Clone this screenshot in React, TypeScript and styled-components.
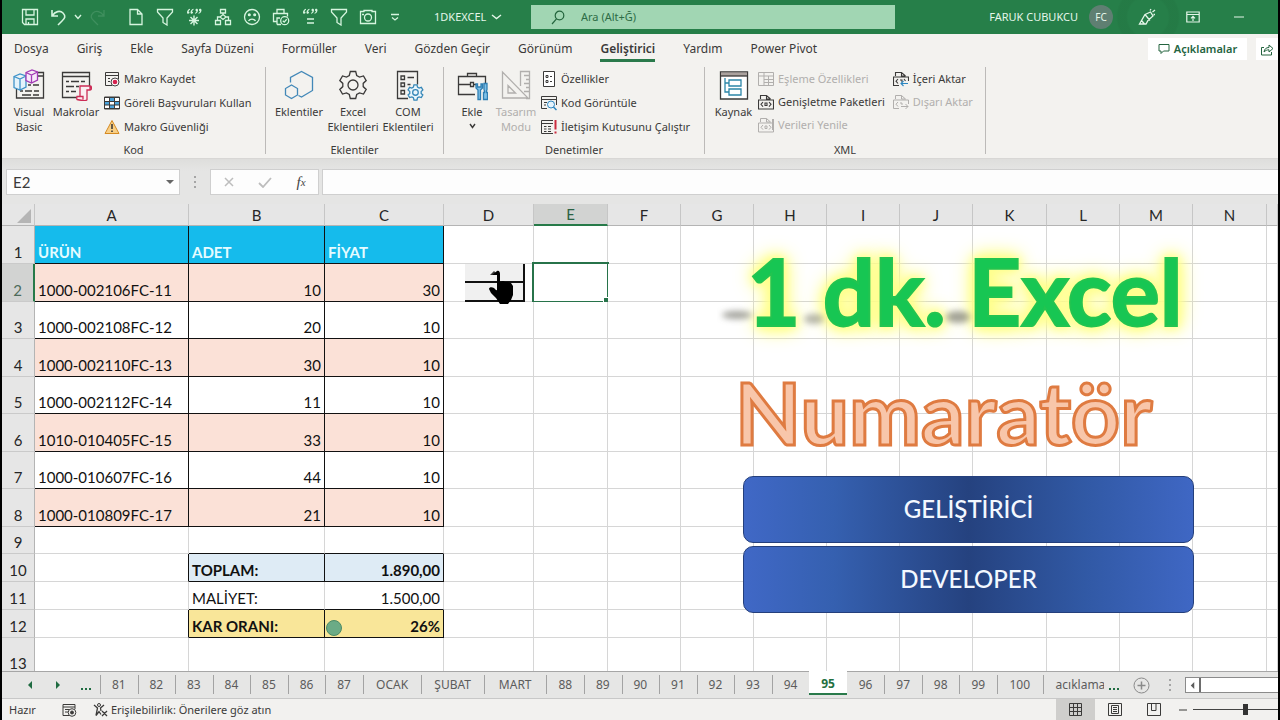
import React from "react";
import styled, { createGlobalStyle, css } from "styled-components";

const uiFont = '"Noto Sans", "Open Sans", sans-serif';
const cellFont = 'Lato, "Liberation Sans", sans-serif';
const green = "#267f49";
const ink = "#3b3a39";
const faded = "#b1afad";

const GlobalStyle = createGlobalStyle`
  * { box-sizing: border-box; }
  body { margin: 0; background: #000; overflow: hidden; }
  button, input { font: inherit; color: inherit; margin: 0; }
`;

const Window = styled.div`
  display: flex;
  flex-direction: column;
  height: 100vh;
  border: 0 solid #000;
  border-width: 0 2px;
  background: #e5e5e4;
  font: 12px/16px ${uiFont};
  color: ${ink};
  overflow: hidden;
`;

const Plain = styled.button`
  display: flex;
  align-items: center;
  justify-content: center;
  flex: none;
  padding: 0;
  border: 0;
  background: none;
  white-space: nowrap;
`;

/* ---------- title bar ---------- */

const TitleBar = styled.header`
  display: flex;
  align-items: center;
  flex: none;
  height: 34px;
  background:
    radial-gradient(circle at calc(100% - 130px) 17px, transparent 20px, #22744166 22px, #22744166 30px, transparent 32px),
    ${green};
  color: #e4f6e9;
`;

const QuickAccess = styled.div`
  display: flex;
  align-items: center;
  flex: none;
  width: 529px;
  padding-left: 13px;
`;

const QuickButton = styled(Plain)<{ $w?: number; $dim?: boolean }>`
  width: ${(p) => p.$w ?? 29}px;
  height: 30px;
  color: ${(p) => (p.$dim ? "#3f8f5e" : "#d6f5df")};
`;

const FileName = styled(Plain)`
  gap: 5px;
  margin-left: 26px;
  font-size: 11px;
`;

const SearchBox = styled.label`
  display: flex;
  align-items: center;
  flex: 1;
  gap: 16px;
  min-width: 0;
  height: 24px;
  padding-left: 20px;
  background: #a1d6b3;
  color: #23653d;
`;

const SearchInput = styled.input`
  flex: 1;
  min-width: 0;
  border: 0;
  padding: 0;
  background: none;
  font-size: 11px;
  outline: 0;
  &::placeholder { color: #2d6c46; opacity: 1; }
`;

const Account = styled.div`
  display: flex;
  align-items: center;
  justify-content: flex-end;
  flex: none;
  width: 383px;
  padding-right: 24px;
  font-size: 11px;
`;

const Avatar = styled(Plain)`
  width: 24px;
  height: 24px;
  margin: 0 3px 0 11px;
  border-radius: 50%;
  background: #5f7f72;
  font-size: 10px;
`;

const WindowButton = styled(Plain)`
  width: 30px;
  height: 30px;
  margin-left: 16px;
`;

/* ---------- ribbon ---------- */

const TabBar = styled.nav`
  display: flex;
  align-items: flex-start;
  flex: none;
  height: 30px;
  gap: 28px;
  padding-left: 12px;
  background: #f3f2ef;
`;

const RibbonTab = styled.a<{ $on?: boolean }>`
  flex: none;
  margin-top: 6px;
  padding-bottom: 1px;
  line-height: 18px;
  color: ${ink};
  text-decoration: none;
  white-space: nowrap;
  border-bottom: 3px solid transparent;
  ${(p) => p.$on && css`
    border-color: #2a7a4b;
    font-weight: 600;
  `}
`;

const TabActions = styled.div`
  display: flex;
  gap: 9px;
  margin: 4px 0 0 auto;
`;

const TabAction = styled(Plain)<{ $w: number }>`
  width: ${(p) => p.$w}px;
  height: 22px;
  gap: 4px;
  background: #fff;
  color: #24643f;
  font-size: 11px;
  font-weight: 600;
`;

const Ribbon = styled.div`
  display: flex;
  flex: none;
  height: 94px;
  padding-top: 3px;
  background: #f3f2ef;
`;

const Group = styled.section<{ $w: number }>`
  display: flex;
  flex-direction: column;
  flex: none;
  width: ${(p) => p.$w}px;
  height: 87px;
  border-right: 1px solid #bcbab8;
`;

const GroupBody = styled.div<{ $left: number }>`
  display: flex;
  flex: 1;
  padding-left: ${(p) => p.$left}px;
`;

const GroupName = styled.h2`
  margin: 0;
  font-size: 11px;
  font-weight: 400;
  line-height: 16px;
  text-align: center;
  margin-bottom: -4px;
`;

const BigButton = styled(Plain)<{ $w: number; $off?: boolean }>`
  flex-direction: column;
  justify-content: flex-start;
  width: ${(p) => p.$w}px;
  padding-top: 2px;
  color: ${(p) => (p.$off ? faded : ink)};
  font-size: 11px;
  line-height: 15px;
  svg { margin-bottom: 3px; }
`;

const DropMark = styled.span`
  padding-top: 4px;
  line-height: 6px;
`;

const Stack = styled.div<{ $left: number; $pitch: number }>`
  display: flex;
  flex-direction: column;
  margin-left: ${(p) => p.$left}px;
  button { height: ${(p) => p.$pitch}px; }
`;

const SmallButton = styled(Plain)<{ $off?: boolean }>`
  justify-content: flex-start;
  gap: 4px;
  color: ${(p) => (p.$off ? faded : ink)};
  font-size: 11px;
`;

/* ---------- formula bar ---------- */

const FormulaBar = styled.div`
  display: flex;
  align-items: center;
  flex: none;
  height: 46px;
  border-top: 1px solid #d8d7d5;
  background: linear-gradient(#dededc, #e5e5e4 12px);
`;

const Field = styled.div<{ $w: number; $left: number }>`
  display: flex;
  align-items: center;
  flex: none;
  width: ${(p) => p.$w}px;
  height: 26px;
  margin-left: ${(p) => p.$left}px;
  border: 1px solid #cfcfcf;
  background: #fdfdfd;
`;

const NameInput = styled.input`
  flex: 1;
  min-width: 0;
  border: 0;
  padding: 0 6px;
  background: none;
  font: 15px/20px ${cellFont};
  outline: 0;
`;

const FormulaInput = styled.input`
  flex: 1;
  min-width: 0;
  height: 26px;
  margin-left: 3px;
  border: 1px solid #cfcfcf;
  border-right: 0;
  background: #fdfdfd;
  outline: 0;
`;

const FormulaButton = styled(Plain)`
  width: 36px;
  height: 24px;
  color: #bdbdbd;
`;

const FxButton = styled(FormulaButton)`
  color: #444;
  font: italic 15px/20px "Liberation Serif", serif;
  sub { font-size: 11px; }
`;

const Dots = styled.span`
  display: flex;
  flex-direction: column;
  align-items: center;
  gap: 3px;
  width: 30px;
  &::before, &::after, i { content: ""; width: 2px; height: 2px; background: #a5a5a5; }
`;

/* ---------- sheet ---------- */

const Sheet = styled.main`
  position: relative;
  flex: 1;
  min-height: 0;
  overflow: hidden;
  background: #fff;
`;

const Grid = styled.table`
  width: 100%;
  table-layout: fixed;
  border-collapse: separate;
  border-spacing: 0;
  font: 15px/18px ${cellFont};
  color: #111;
`;

const ColHead = styled.th<{ $on?: boolean }>`
  height: 22px;
  padding: 0;
  border-right: 1px solid #c6c6c6;
  border-bottom: 1px solid #b4b4b4;
  background: #e6e6e6;
  color: #262626;
  font-weight: 400;
  ${(p) => p.$on && css`
    background: #d2d3d2;
    border-bottom: 2px solid #277a49;
    color: #2b6143;
  `}
`;

const Corner = styled.svg`
  display: block;
  width: 14px;
  height: 14px;
  margin: 3px 3px 0 auto;
`;

const RowHead = styled.th<{ $h: number; $on?: boolean }>`
  height: ${(p) => p.$h}px;
  padding: 0 0 2px;
  border-right: 1px solid #b4b4b4;
  border-bottom: 1px solid #cacaca;
  background: #e6e6e6;
  color: #262626;
  font-weight: 400;
  vertical-align: bottom;
  ${(p) => p.$on && css`
    background: #d2d3d2;
    border-right: 2px solid #277a49;
    color: #4d6b5a;
  `}
`;

type CellStyle = { $fill?: string; $bold?: boolean; $num?: boolean; $light?: boolean; $r?: boolean; $b?: boolean };

const Cell = styled.td<CellStyle>`
  position: relative;
  padding: 0 3px 2px;
  vertical-align: bottom;
  white-space: nowrap;
  border: 0 solid;
  border-width: 0 1px 1px 0;
  border-right-color: ${(p) => (p.$r ? "#111" : "#d6d6d6")};
  border-bottom-color: ${(p) => (p.$b ? "#111" : "#d6d6d6")};
  background: ${(p) => p.$fill ?? "#fff"};
  text-align: ${(p) => (p.$num ? "right" : "left")};
  font-weight: ${(p) => (p.$bold ? 700 : 400)};
  color: ${(p) => (p.$light ? "#e6fbff" : "#111")};
`;

const Selection = styled.span`
  position: absolute;
  inset: -2px;
  border: 2px solid #27734a;
  &::after {
    content: "";
    position: absolute;
    right: -3px;
    bottom: -3px;
    width: 6px;
    height: 6px;
    border: 1px solid #fff;
    border-width: 1px 0 0 1px;
    background: #27734a;
  }
`;

const StatusDot = styled.span`
  position: absolute;
  left: 1px;
  bottom: 1px;
  width: 16px;
  height: 16px;
  border: 1px solid #4b8a66;
  border-radius: 50%;
  background: #6bab86;
`;

const Spinner = styled.div`
  position: absolute;
  left: 463px;
  top: 60px;
  display: flex;
  flex-direction: column;
  width: 60px;
`;

const SpinButton = styled.button`
  height: 19px;
  padding: 0;
  border: 0 solid #111;
  border-width: 0 2px 2px 0;
  background: #f0f0f0;
  display: flex;
  align-items: center;
  justify-content: center;
`;

const HandCursor = styled.svg`
  position: absolute;
  left: 486px;
  top: 65px;
`;

const WordArt = styled.p<{ $left: number; $top: number; $size: number }>`
  position: absolute;
  left: ${(p) => p.$left}px;
  top: ${(p) => p.$top}px;
  margin: 0;
  font: 700 ${(p) => p.$size}px/100px ${cellFont};
  white-space: nowrap;
`;

const Headline = styled(WordArt)`
  color: #17c653;
  -webkit-text-stroke: 2px #22c450;
  text-shadow: 0 0 8px #ffff8c, 0 0 12px #ffff8c, 0 0 16px #ffff8c, 0 0 20px #ffff8c, 0 0 24px #ffff8c;
`;

const Subject = styled(WordArt)`
  color: #f8c6aa;
  -webkit-text-stroke: 3px #df7b41;
`;

const Shade = styled.svg`
  position: absolute;
  left: 715px;
  top: 92px;
`;

const Banners = styled.div`
  position: absolute;
  left: 741px;
  top: 272px;
  display: flex;
  flex-direction: column;
  gap: 3px;
  width: 451px;
`;

const Banner = styled.button`
  height: 67px;
  padding: 0 0 2px;
  border: 1px solid #243f7c;
  border-radius: 10px;
  background: linear-gradient(90deg, #4068c6, #3560b0 20%, #25427f 50%, #3159a5 76%, #3f67c4);
  color: #f3f8ff;
  font: 500 24px/30px ${cellFont};
`;

/* ---------- sheet tabs and status bar ---------- */

const SheetBar = styled.nav`
  display: flex;
  flex: none;
  height: 28px;
  border-top: 1px solid #a6a6a6;
  border-bottom: 1px solid #c8c8c8;
  background: #e6e6e5;
  color: #5c5c5c;
`;

const SheetNav = styled.div`
  display: flex;
  align-items: center;
  flex: none;
  width: 98px;
  padding-left: 14px;
  color: #1f6b41;
`;

const NavButton = styled(Plain)`
  width: 28px;
  height: 24px;
  color: #1f6b41;
`;

const Ellipsis = styled.span`
  width: 11px;
  height: 2px;
  margin-top: 7px;
  background: repeating-linear-gradient(90deg, #1f6b41 0 2px, transparent 2px 4px);
`;

const TabStrip = styled.div`
  display: flex;
  flex: 1;
  min-width: 0;
`;

const SheetTab = styled.a<{ $w: number; $on?: boolean; $noLine?: boolean }>`
  position: relative;
  flex: 1 1 ${(p) => p.$w}px;
  min-width: 0;
  line-height: 25px;
  text-align: center;
  text-decoration: none;
  white-space: nowrap;
  overflow: hidden;
  color: inherit;
  &::before {
    content: "";
    position: absolute;
    left: 0;
    top: 3px;
    bottom: 4px;
    width: ${(p) => (p.$noLine ? 0 : 1)}px;
    background: #a3a3a3;
  }
  ${(p) => p.$on && css`
    height: 24px;
    margin-top: -1px;
    background: #fff;
    border-bottom: 2px solid #2a7a4b;
    color: #24703f;
    font-weight: 700;
  `}
`;

const ClippedTab = styled(SheetTab)`
  padding-left: 13px;
  text-align: left;
`;

const SheetBarEnd = styled.div`
  display: flex;
  align-items: center;
  flex: none;
  width: 174px;
  padding-left: 5px;
`;

const AddSheet = styled(Plain)`
  width: 28px;
  margin-left: 7px;
  color: #8a8a8a;
`;

const ScrollTrack = styled.div`
  display: flex;
  flex: 1;
  height: 16px;
  border: 1px solid #8b8b8b;
  border-right: 0;
  background: #fff;
`;

const ScrollArrow = styled(Plain)`
  width: 15px;
  border-right: 2px solid #6d6d6d;
`;

const StatusBar = styled.footer`
  display: flex;
  align-items: center;
  flex: none;
  height: 21px;
  padding-left: 7px;
  background: #f2f1ef;
  font-size: 11px;
`;

const StatusItem = styled(Plain)<{ $left: number }>`
  gap: 3px;
  margin-left: ${(p) => p.$left}px;
`;

const ViewTools = styled.div`
  display: flex;
  align-items: center;
  margin-left: auto;
  height: 21px;
`;

const ViewButton = styled(Plain)<{ $on?: boolean }>`
  width: 39px;
  height: 21px;
  background: ${(p) => (p.$on ? "#cfcecc" : "none")};
`;

const ZoomOut = styled(Plain)`
  width: 20px;
  height: 16px;
`;

const Zoom = styled.input`
  appearance: none;
  width: 85px;
  height: 16px;
  background: linear-gradient(#444, #444) center / 100% 1px no-repeat;
  &::-webkit-slider-thumb {
    appearance: none;
    width: 5px;
    height: 11px;
    background: #333;
  }
`;

/* ---------- icons ---------- */

type IconProps = { w?: number; h?: number; sw?: number; children: React.ReactNode };
const Icon = ({ w = 18, h = w, sw = 1, children }: IconProps) => (
  <svg width={w} height={h} viewBox={`0 0 ${w} ${h}`} fill="none" stroke="currentColor" strokeWidth={sw} aria-hidden="true">
    {children}
  </svg>
);

const SaveIcon = () => <Icon sw={1.3}><path d="M1.5 1.5h15v15h-13l-2-2zM5 1.5v5.5h8V1.5M5 16.500v-5.500h8v5.500M7.500 14v2" /></Icon>;
const UndoIcon = () => <Icon sw={1.6}><path d="M2 2v6h6M2.500 7.500C5 3.500 10 2 13 5s2 5.500-1 8l-4 4" /></Icon>;
const RedoIcon = () => <Icon sw={1.3}><path d="M16 2v6h-6M15.500 7.500C13 3.500 8 2 5 5s-2 5.500 1 8l4 4" /></Icon>;
const Chevron = ({ w = 8 }: { w?: number }) => <Icon w={w} h={6} sw={1.4}><path d={`M1 1l${w / 2 - 1} 3.500L${w - 1} 1`} /></Icon>;
const PageIcon = () => <Icon w={16} h={18} sw={1.3}><path d="M2 1.500h7.500L14 6v10.500H2zM9.500 1.500V6H14" /></Icon>;
const FilterIcon = () => <Icon sw={1.3}><path d="M1.500 1.500h15v2.500l-5.500 6v7l-4-2.500V10L1.500 4z" /></Icon>;
const QuoteMarks = () => (
  <g fill="currentColor" stroke="none">
    <path d="M5 .8C3 1.300 2 2.800 2 4.300c0 1 .5 1.500 1.200 1.500.8 0 1.300-.5 1.300-1.200 0-.6-.4-1.100-1-1.200.2-.7.7-1.300 1.500-1.700zM8.500 .8c-2 .5-3 2-3 3.500 0 1 .5 1.500 1.200 1.500.8 0 1.300-.5 1.300-1.200 0-.6-.4-1.100-1-1.200.2-.7.7-1.300 1.500-1.700z" />
    <path d="M10 5.800c2-.5 3-2 3-3.500 0-1-.5-1.500-1.200-1.500-.8 0-1.300.5-1.300 1.200 0 .6.4 1.100 1 1.200-.2.7-.7 1.300-1.500 1.700zM13.500 5.800c2-.5 3-2 3-3.500 0-1-.5-1.500-1.200-1.500-.8 0-1.300.5-1.300 1.200 0 .6.4 1.100 1 1.200-.2.7-.7 1.300-1.500 1.700z" />
  </g>
);
const QuoteStar = () => <Icon sw={1.4}><QuoteMarks /><path d="M9 7.500v10M4 12.500h10M5.500 9l7 7M12.500 9l-7 7" /></Icon>;
const QuoteEquals = () => <Icon sw={1.4}><QuoteMarks /><path d="M6 11h7M6 15h7" /></Icon>;
const OrgIcon = () => <Icon sw={1.3}><path d="M6.500 1.500h5v3.500h-5zM9 5v2M9 6.500l3 2.500-3 2.500L6 9zM6 9H3.500v3.500M12 9h2.500v3.500M1.500 12.500h5v4h-5zM11.500 12.500h5v4h-5z" /></Icon>;
const FrownIcon = () => <Icon sw={1.3}><circle cx="9" cy="9" r="7.500" /><path d="M5.500 13c1.500-2.500 5.500-2.500 7 0" /><circle cx="6.300" cy="6.800" r=".9" fill="currentColor" /><circle cx="11.700" cy="6.800" r=".9" fill="currentColor" /></Icon>;
const PrintIcon = () => <Icon sw={1.3}><path d="M5 5.500v-4h7v4M5 13.500H1.500v-8h14v3M5 16.500V10h3M5 16.500h4" /><circle cx="12.700" cy="12.700" r="4" /><path d="M10.800 12.700l1.400 1.400 2.500-2.800" /></Icon>;
const CameraIcon = () => <Icon sw={1.3}><path d="M1.500 3.500H5V2.500h8v1h3.500v12h-15z" /><circle cx="9" cy="9.500" r="3.500" /><path d="M3 6.500h2" /></Icon>;
const MoreIcon = () => <Icon w={10} h={8} sw={1.3}><path d="M1 1.500h8M2 4.500l3 2.500 3-2.500" /></Icon>;
const SearchIcon = () => <Icon w={14} h={15} sw={1.2}><circle cx="8.500" cy="5.500" r="4.300" /><path d="M5.500 8.800L1 14" /></Icon>;
const PenIcon = () => <Icon w={18} sw={1.3}><path d="M7 6.500L12.500 4l2.500 4-5 4.500-2 3.500H1.500L7 6.500zM7 6.500l5 6M3.500 12.500l3 3.500M12 2.500l1-1.500M14.500 4L17 2M15.500 6.500H17" /></Icon>;
const RibbonIcon = () => <Icon w={14} h={12} sw={1.2}><path d="M.8 1h12.400v10H.8zM.8 3.500h12.400M7 10V5.500M5 7.300l2-2 2 2" /></Icon>;
const CommentIcon = () => <Icon w={12} h={12}><path d="M1 1.500h10v6.500H5.500L3 10.500V8H1z" /></Icon>;
const ShareIcon = () => <Icon w={14} h={13}><path d="M4 4.500H1.500v7.500h10V9M4 9c.5-3 2-4.500 5-4.500V2l4 3.500-4 3.500V6.800C7 6.800 5.500 7.500 4 9z" /></Icon>;

const VisualBasicIcon = () => (
  <Icon w={32} h={32} sw={1.3}>
    <path d="M24 3.500h6.500v25.500h-27V20M24 7h6.500" /><path d="M15 16h3M20 16h6M7 22h3M12 22h7M21 22h5M9 26h9M20 26h6" />
    <path d="M1 7.500L7 5l6 2v11l-6 3-6-2.500zM1 7.500L7 10l6-3M7 10v11" stroke="#3e93c9" fill="#e4f3fb" />
    <path d="M13 3.500L19 1l5.500 2v8l-6 3L13 11.500zM13 3.500l5.500 2.500 6-3M18.500 6v8" stroke="#a23bb5" fill="#f7e9fa" />
  </Icon>
);
const MacroIcon = () => (
  <Icon w={32} h={32} sw={1.3}>
    <path d="M17 28.500H2.500v-25h27V17M2.500 7.500h27" /><path d="M6 12.500h3M11 12.500h8M21 12.500h4M6 17.500h8M16 17.500h3M6 22.500h3M11 22.500h5" />
    <path d="M20 17h10v4h-3v9.500c0 1.500-4 1.500-10 0-.500-1 0-3 0-3h3zM30 17c2 0 2 4 0 4M17 27.500h6v3" stroke="#cc2b55" fill="#fbeef1" />
  </Icon>
);
const RecordIcon = () => <Icon w={16}><path d="M8 14.500H1.500v-13h13V8M1.500 4.500h13M4 7.500h2M4 10.500h2M9 7.500h2" /><circle cx="11" cy="11" r="4" stroke="#444" fill="#fff" /><circle cx="11" cy="11" r="2.300" fill="#d6224f" stroke="none" /></Icon>;
const RelativeIcon = () => <Icon w={16}><path d="M.5 2h15v12H.5z" fill="#fff" /><path d="M5.500 2h5v4h-5zM.5 6h5v4h-5zM10.500 6h5v4h-5zM5.500 10h5v4h-5z" fill="#4ba3dc" stroke="none" /><path d="M.5 2.500h15v11H.5zM5.500 2.500v11M10.500 2.500v11M.5 6.500h15M.5 10h15" /></Icon>;
const WarnIcon = () => <Icon w={16}><path d="M8 1.500L15 14.500H1z" fill="#f8cf85" stroke="#d58a22" /><path d="M8 5v5M8 11.500v1.500" stroke="#333" strokeWidth="1.500" /></Icon>;
const AddinsIcon = () => <Icon w={32} sw={1.3}><g stroke="#4288b8"><path d="M7.500 13.500V8.500L18.500 2.500l11 6v13l-11 6.500-3-1.500" /><path d="M8.500 16l6 3.500v6.500l-6 3.500-6-3.500v-6.500z" /></g></Icon>;
const GearShape = () => <><path d="M13.300 2.500h5.400l1 4 2.800 1.600 4-1.200 2.700 4.700-3 2.800v3.200l3 2.800-2.700 4.700-4-1.200-2.800 1.600-1 4h-5.400l-1-4-2.800-1.600-4 1.200-2.700-4.700 3-2.800v-3.200l-3-2.800 2.700-4.700 4 1.200 2.800-1.600z" /><circle cx="16" cy="16" r="5" /></>;
const GearIcon = () => <Icon w={32} sw={1.3}><GearShape /></Icon>;
const ComIcon = () => (
  <Icon w={32} sw={1.3}>
    <path d="M16 29.500H5.500v-27h20v13" /><path d="M9 7h3.500v3.500H9zM9 14h3.500v3.500H9zM9 21.500h3.500V25H9zM15.500 8.500H22M15.500 15.500h3" />
    <g transform="translate(14.500 14.500) scale(.56)" stroke="#3788b8" strokeWidth="2.300" fill="#e9f5fb"><GearShape /></g>
  </Icon>
);
const ToolboxIcon = () => (
  <Icon w={32} sw={1.3}>
    <path d="M19 25.500H2.500v-18h27V15M11.500 7.500v-3h9v3M2.500 15.500h12M17.500 15.500h3M14.500 13.500h3v4h-3z" />
    <path d="M20 15v4l2 2v9.500h2.500V21l2-2v-4h-1.500v3h-3.500v-3zM28 14.500h3v6l-.5 1.500v1.500h1v7h-4v-7h1V22l-.5-1.500z" stroke="#2f7fb3" fill="#7fc1e8" />
  </Icon>
);
const DesignIcon = () => <Icon w={32} sw={1.3}><path d="M2.500 3v26H28zM8 16.500V24h7.500zM20.500 17V2.500h9v27H26M24 6.500h5M26 10.500h3M24 14.500h5M26 18.500h3M24 22.500h5" /></Icon>;
const PropsIcon = () => <Icon w={16}><path d="M2.500.5h11v15h-11z" fill="#fff" /><path d="M5 4.500h2v2H5zM5 9.500h2v2H5zM9 5.500h2M9 10.500h2" /></Icon>;
const CodeIcon = () => <Icon w={16}><path d="M6 13.500H.5v-12h15V10M.5 4.500h15M3 7.500h3M3 10h2" /><circle cx="10" cy="9.500" r="3.500" stroke="#2c86c0" fill="#e5f3fb" /><path d="M12.500 12l3 3" stroke="#2c86c0" strokeWidth="1.500" /></Icon>;
const DialogIcon = () => <Icon w={16}><path d="M12 1.500H.5v13H12M.5 4.500H12M3 7.500h2.500M7 7.500h3M3 10h2.500M7 10h3M3 12.500h2.500M7 12.500h3" /><path d="M14.500 1v9.500M14.500 12.500v2" stroke="#cc2b3f" strokeWidth="2" /></Icon>;
const SourceIcon = () => <Icon w={32} sw={1.3}><path d="M2.500 3h27v27h-27z" fill="#fff" /><path d="M3 3.500h26v3.500H3z" fill="#aaa19d" stroke="none" /><path d="M2.500 7h27" /><path d="M11 11h12v6H11zM11 20h12v6H11zM7 9v14h4M7 14h4" stroke="#2c86a8" /></Icon>;
const MapIcon = () => <Icon w={16}><path d="M.5 1.500h15v13H.5zM.5 5h15M6 1.500v13M6 8.500h9M6 11.500h9M10.500 5v9.500" /></Icon>;
const XmlFrame = () => <path d="M2.500 5V1.500h6L12.500 5M8.500 1.500V5h4M.5 6h15v9H.5zM5 8l-2 2.300 2 2.300M11 8l2 2.300-2 2.300M7 9h2v2.500H7z" />;
const PackIcon = () => <Icon w={16} sw={1.1}><XmlFrame /></Icon>;
const ImportIcon = () => <Icon w={16} sw={1.1}><path d="M2.500 5V1.500h6L12.500 5M8.500 1.500V5h4M6 14.500H.5V6h15v4M5 8l-2 2.200 2 2.300M11 8l1.500 2M7 9h2v2" /><path d="M15 12.500H8M10.500 10L8 12.500l2.500 2.500" stroke="#2c86c0" /></Icon>;
const ExportIcon = () => <Icon w={16}><path d="M2.500 5V1.500h6L12.500 5M8.500 1.500V5h4M6 14.500H.5V6h15v4M5 8l-2 2.200 2 2.300M7 9h2v2M8 12.500h7M12.500 10l2.500 2.500-2.500 2.500" /></Icon>;
const RefreshIcon = () => <Icon w={16}><XmlFrame /><path d="M15 2v11" strokeWidth="2" /></Icon>;
const Triangle = ({ d, size = 8 }: { d: string; size?: number }) => <svg width={size} height={size} viewBox="0 0 8 8" fill="currentColor" aria-hidden="true"><path d={d} /></svg>;

/* ---------- data ---------- */

const ribbonTabs = ["Dosya", "Giriş", "Ekle", "Sayfa Düzeni", "Formüller", "Veri", "Gözden Geçir", "Görünüm", "Geliştirici", "Yardım", "Power Pivot"];

const columns: [string, number | undefined][] = [
  ["A", 154], ["B", 136], ["C", 119], ["D", 90], ["E", 74], ["F", 73], ["G", 73], ["H", 73], ["I", 73],
  ["J", 73], ["K", 74], ["L", 73], ["M", 73], ["N", 74], ["", undefined],
];

const rows: { h: number; v: string[] }[] = [
  { h: 38, v: ["ÜRÜN", "ADET", "FİYAT"] },
  { h: 38, v: ["1000-002106FC-11", "10", "30"] },
  { h: 37, v: ["1000-002108FC-12", "20", "10"] },
  { h: 38, v: ["1000-002110FC-13", "30", "10"] },
  { h: 37, v: ["1000-002112FC-14", "11", "10"] },
  { h: 38, v: ["1010-010405FC-15", "33", "10"] },
  { h: 37, v: ["1000-010607FC-16", "44", "10"] },
  { h: 38, v: ["1000-010809FC-17", "21", "10"] },
  { h: 27, v: [] },
  { h: 28, v: ["", "TOPLAM:", "1.890,00"] },
  { h: 28, v: ["", "MALİYET:", "1.500,00"] },
  { h: 28, v: ["", "KAR ORANI:", "26%"] },
  { h: 37, v: [] },
];

const boxed = (r: number, c: number) =>
  (r >= 1 && r <= 8 && c >= 0 && c <= 2) || ((r === 10 || r === 12) && (c === 1 || c === 2));

const fillOf = (r: number, c: number) => {
  if (!boxed(r, c)) return undefined;
  if (r === 1) return "#15bbec";
  if (r === 10) return "#deebf5";
  if (r === 12) return "#f9e699";
  return r % 2 === 0 ? "#fbe1d7" : undefined;
};

const sheetTabs: [string, number][] = [
  ["81", 36], ["82", 36], ["83", 36], ["84", 36], ["85", 36], ["86", 36], ["87", 36],
  ["OCAK", 57], ["ŞUBAT", 61], ["MART", 61],
  ["88", 36], ["89", 36], ["90", 36], ["91", 36], ["92", 36], ["93", 36], ["94", 36],
  ["95", 36], ["96", 36], ["97", 36], ["98", 36], ["99", 36], ["100", 44],
];

const quickTools: [string, React.ReactNode][] = [
  ["Yeni", <PageIcon />], ["Filtre", <FilterIcon />], ["Özel", <QuoteStar />], ["Hiyerarşi", <OrgIcon />],
  ["Yüz", <FrownIcon />], ["Yazdır", <PrintIcon />], ["Eşittir", <QuoteEquals />], ["Süz", <FilterIcon />], ["Kamera", <CameraIcon />],
];

export default function App() {
  return (
    <Window>
      <GlobalStyle />
      <TitleBar>
        <QuickAccess>
          <QuickButton $w={30} aria-label="Kaydet"><SaveIcon /></QuickButton>
          <QuickButton $w={28} aria-label="Geri Al"><UndoIcon /></QuickButton>
          <QuickButton $w={10} aria-label="Geri alma listesi"><Chevron /></QuickButton>
          <QuickButton $w={28} $dim aria-label="Yinele"><RedoIcon /></QuickButton>
          <QuickButton $w={10} $dim aria-label="Yineleme listesi" />
          {quickTools.map(([name, icon]) => (
            <QuickButton key={name} aria-label={name}>{icon}</QuickButton>
          ))}
          <QuickButton $w={26} aria-label="Özelleştir"><MoreIcon /></QuickButton>
          <FileName>1DKEXCEL <Chevron w={11} /></FileName>
        </QuickAccess>
        <SearchBox>
          <SearchIcon />
          <SearchInput placeholder="Ara (Alt+Ğ)" aria-label="Ara" />
        </SearchBox>
        <Account>
          FARUK CUBUKCU
          <Avatar>FC</Avatar>
          <WindowButton aria-label="Çizim"><PenIcon /></WindowButton>
          <WindowButton aria-label="Şerit Görüntüleme"><RibbonIcon /></WindowButton>
          <WindowButton aria-label="Simge Durumuna Küçült"><Icon w={10} h={2}><path d="M0 1h10" /></Icon></WindowButton>
        </Account>
      </TitleBar>

      <TabBar>
        {ribbonTabs.map((t) => (
          <RibbonTab key={t} href="#" $on={t === "Geliştirici"}>{t}</RibbonTab>
        ))}
        <TabActions>
          <TabAction $w={99}><CommentIcon />Açıklamalar</TabAction>
          <TabAction $w={22} aria-label="Paylaş"><ShareIcon /></TabAction>
        </TabActions>
      </TabBar>

      <Ribbon>
        <Group $w={264}>
          <GroupBody $left={4}>
            <BigButton $w={46}><VisualBasicIcon />Visual<br />Basic</BigButton>
            <BigButton $w={48}><MacroIcon />Makrolar</BigButton>
            <Stack $left={4} $pitch={24}>
              <SmallButton><RecordIcon />Makro Kaydet</SmallButton>
              <SmallButton><RelativeIcon />Göreli Başvuruları Kullan</SmallButton>
              <SmallButton><WarnIcon />Makro Güvenliği</SmallButton>
            </Stack>
          </GroupBody>
          <GroupName>Kod</GroupName>
        </Group>
        <Group $w={178}>
          <GroupBody $left={6}>
            <BigButton $w={54}><AddinsIcon />Eklentiler</BigButton>
            <BigButton $w={54}><GearIcon />Excel<br />Eklentileri</BigButton>
            <BigButton $w={56}><ComIcon />COM<br />Eklentileri</BigButton>
          </GroupBody>
          <GroupName>Eklentiler</GroupName>
        </Group>
        <Group $w={261}>
          <GroupBody $left={6}>
            <BigButton $w={44}><ToolboxIcon />Ekle<DropMark><Chevron w={7} /></DropMark></BigButton>
            <BigButton $w={44} $off><DesignIcon />Tasarım<br />Modu</BigButton>
            <Stack $left={3} $pitch={24}>
              <SmallButton><PropsIcon />Özellikler</SmallButton>
              <SmallButton><CodeIcon />Kod Görüntüle</SmallButton>
              <SmallButton><DialogIcon />İletişim Kutusunu Çalıştır</SmallButton>
            </Stack>
          </GroupBody>
          <GroupName>Denetimler</GroupName>
        </Group>
        <Group $w={281}>
          <GroupBody $left={6}>
            <BigButton $w={45}><SourceIcon />Kaynak</BigButton>
            <Stack $left={2} $pitch={23}>
              <SmallButton $off><MapIcon />Eşleme Özellikleri</SmallButton>
              <SmallButton><PackIcon />Genişletme Paketleri</SmallButton>
              <SmallButton $off><RefreshIcon />Verileri Yenile</SmallButton>
            </Stack>
            <Stack $left={8} $pitch={23}>
              <SmallButton><ImportIcon />İçeri Aktar</SmallButton>
              <SmallButton $off><ExportIcon />Dışarı Aktar</SmallButton>
            </Stack>
          </GroupBody>
          <GroupName>XML</GroupName>
        </Group>
      </Ribbon>

      <FormulaBar>
        <Field $w={174} $left={4}>
          <NameInput defaultValue="E2" aria-label="Ad Kutusu" />
          <Plain aria-label="Adlar"><Icon w={18} h={6}><path d="M5 1h8l-4 4z" fill="#666" stroke="none" /></Icon></Plain>
        </Field>
        <Dots><i /></Dots>
        <Field $w={109} $left={0}>
          <FormulaButton aria-label="İptal"><Icon w={12}><path d="M2 2l8 8M10 2l-8 8" strokeWidth="1.500" /></Icon></FormulaButton>
          <FormulaButton aria-label="Gir"><Icon w={14} h={12}><path d="M1 7l4 4 8-9" strokeWidth="1.800" /></Icon></FormulaButton>
          <FxButton aria-label="İşlev Ekle">f<sub>x</sub></FxButton>
        </Field>
        <FormulaInput aria-label="Formül Çubuğu" />
      </FormulaBar>

      <Sheet>
        <Grid>
          <colgroup>
            <col width={33} />
            {columns.map(([c, w]) => <col key={c} width={w} />)}
          </colgroup>
          <thead>
            <tr>
              <ColHead aria-label="Tümünü seç"><Corner aria-hidden="true" viewBox="0 0 14 14"><path d="M14 0v14H0z" fill="#b5b5b5" /></Corner></ColHead>
              {columns.map(([c]) => <ColHead key={c} $on={c === "E"} scope="col">{c}</ColHead>)}
            </tr>
          </thead>
          <tbody>
            {rows.map(({ h, v }, i) => {
              const r = i + 1;
              return (
                <tr key={r}>
                  <RowHead $h={h} $on={r === 2} scope="row">{r}</RowHead>
                  {columns.map(([name], c) => (
                    <Cell
                      key={name}
                      $fill={fillOf(r, c)}
                      $bold={r === 1 || r === 10 || r === 12}
                      $light={r === 1}
                      $num={c === 2 ? r > 1 : c === 1 && r > 1 && r < 9}
                      $r={boxed(r, c) || boxed(r, c + 1)}
                      $b={boxed(r, c) || boxed(r + 1, c)}
                    >
                      {v[c]}
                      {r === 2 && name === "E" && <Selection />}
                      {r === 12 && name === "C" && <StatusDot />}
                    </Cell>
                  ))}
                </tr>
              );
            })}
          </tbody>
        </Grid>

        <Spinner>
          <SpinButton aria-label="Artır"><Triangle d="M4 2l4 4H0z" /></SpinButton>
          <SpinButton aria-label="Azalt"><Triangle d="M4 6L0 2h8z" /></SpinButton>
        </Spinner>
        <HandCursor width="27" height="36" viewBox="0 0 27 36" aria-hidden="true">
          <path d="M4 6l5-4c2-1 3 1 3 3v8l3-1 2 1 3 0 3 1 2 3v9l-2 5-3 4H12l-4-6-5-5-2-4c0-2 3-2 5-1l3 3V6z" fill="#000" />
        </HandCursor>

        <Headline $left={745} $top={37} $size={92}>1 dk. Excel</Headline>
        <Shade width="480" height="50" viewBox="0 0 480 50" aria-hidden="true">
          <g fill="#45453a" style={{ filter: "blur(3px)" }}>
            <ellipse cx="20" cy="19" rx="15" ry="4" opacity=".5" />
            <ellipse cx="97" cy="23" rx="10" ry="5" opacity=".4" />
            <ellipse cx="241" cy="21" rx="12" ry="6" opacity=".5" />
          </g>
        </Shade>
        <Subject $left={733} $top={158} $size={86}>Numaratör</Subject>

        <Banners>
          <Banner>GELİŞTİRİCİ</Banner>
          <Banner>DEVELOPER</Banner>
        </Banners>
      </Sheet>

      <SheetBar>
        <SheetNav>
          <NavButton aria-label="Önceki sayfa"><Triangle d="M6 0v8L2 4z" /></NavButton>
          <NavButton aria-label="Sonraki sayfa"><Triangle d="M2 0l4 4-4 4z" /></NavButton>
          <NavButton aria-label="Tüm sayfalar"><Ellipsis /></NavButton>
        </SheetNav>
        <TabStrip>
          {sheetTabs.map(([t, w]) => (
            <SheetTab key={t} href="#" $w={w} $on={t === "95"} $noLine={t === "95" || t === "96"}>{t}</SheetTab>
          ))}
          <ClippedTab href="#" $w={60}>acıklama</ClippedTab>
        </TabStrip>
        <SheetBarEnd>
          <Ellipsis />
          <AddSheet aria-label="Yeni sayfa"><Icon w={17}><circle cx="8.500" cy="8.500" r="7.500" /><path d="M8.500 4.500v8M4.500 8.500h8" strokeWidth="1.500" /></Icon></AddSheet>
          <Dots><i /></Dots>
          <ScrollTrack>
            <ScrollArrow aria-label="Sola kaydır"><Triangle d="M6 0v8L2 4z" size={7} /></ScrollArrow>
          </ScrollTrack>
        </SheetBarEnd>
      </SheetBar>

      <StatusBar>
        Hazır
        <StatusItem $left={26} aria-label="Makro kaydet"><Icon w={15} h={14}><path d="M7 12.500H1v-11h12V6M1 4h12M3 6.500h4M3 9h3" /><circle cx="10" cy="9.500" r="3.800" /><circle cx="10" cy="9.500" r="1.500" fill="currentColor" /></Icon></StatusItem>
        <StatusItem $left={16}><Icon w={15} h={15}><circle cx="6" cy="3" r="1.500" /><path d="M1 3l3.500 3L3 13.500l3-4 2 3M11 3L7.500 6l.5 3M9 9l5 5M14 9l-5 5" strokeWidth="1.300" /></Icon>Erişilebilirlik: Önerilere göz atın</StatusItem>
        <ViewTools>
          <ViewButton $on aria-label="Normal"><Icon w={13}><path d="M.5.5h12v12H.5zM4.500.5v12M8.500.5v12M.5 4.500h12M.5 8.500h12" /></Icon></ViewButton>
          <ViewButton aria-label="Sayfa Düzeni"><Icon w={14} h={13}><path d="M.5.5h13v12H.5zM3.500 2.500h7v8h-7zM5 4.500h4M5 6.500h4M5 8.500h4" /></Icon></ViewButton>
          <ViewButton aria-label="Sayfa Sonu Önizleme"><Icon w={14} h={13}><path d="M.5.5h13v12H.5zM4.500.5v7H9v-7" /></Icon></ViewButton>
          <ZoomOut aria-label="Uzaklaştır"><Icon w={8} h={2}><path d="M0 1h8" /></Icon></ZoomOut>
          <Zoom type="range" min={0} max={100} defaultValue={62} aria-label="Yakınlaştırma" />
        </ViewTools>
      </StatusBar>
    </Window>
  );
}
